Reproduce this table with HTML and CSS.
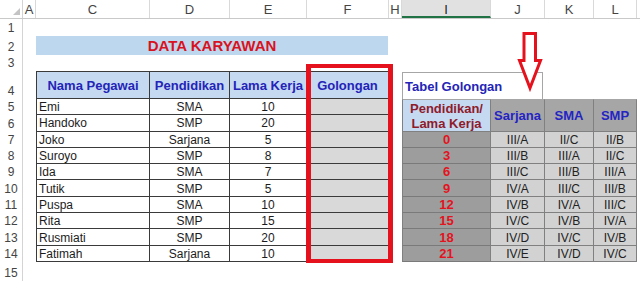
FILE: index.html
```html
<!DOCTYPE html>
<html>
<head>
<meta charset="utf-8">
<link rel="stylesheet" href="styles.css">
</head>
<body>
<div class="sheet">
  <div class="colbar">
    <div class="corner"><svg width="22" height="18" viewBox="0 0 22 18"><polygon points="20,8 20,15 13,15" fill="#c4c4c4"/></svg></div>
    <div class="ch wa">A</div>
    <div class="ch wc">C</div>
    <div class="ch wd">D</div>
    <div class="ch we">E</div>
    <div class="ch wf">F</div>
    <div class="ch wh">H</div>
    <div class="ch wi sel">I</div>
    <div class="ch wj">J</div>
    <div class="ch wk">K</div>
    <div class="ch wl">L</div>
    <div class="ch wr"></div>
  </div>
  <div class="body">
    <div class="rowbar">
      <div class="rh r1">1</div>
      <div class="rh r2">2</div>
      <div class="rh r3">3</div>
      <div class="rh r4">4</div>
      <div class="rh rn">5</div>
      <div class="rh rn">6</div>
      <div class="rh rn">7</div>
      <div class="rh rn">8</div>
      <div class="rh rn">9</div>
      <div class="rh rn">10</div>
      <div class="rh rn">11</div>
      <div class="rh rn">12</div>
      <div class="rh rn">13</div>
      <div class="rh rn">14</div>
      <div class="rh r15">15</div>
    </div>
    <div class="cells">
      <div class="title">DATA KARYAWAN</div>

      <div class="ltable">
        <div class="c hd first">Nama Pegawai</div>
        <div class="c hd">Pendidikan</div>
        <div class="c hd">Lama Kerja</div>
        <div class="c hd">Golongan</div>

        <div class="c name first">Emi</div><div class="c">SMA</div><div class="c">10</div><div class="c gol"></div>
        <div class="c name first">Handoko</div><div class="c">SMP</div><div class="c">20</div><div class="c gol"></div>
        <div class="c name first">Joko</div><div class="c">Sarjana</div><div class="c">5</div><div class="c gol"></div>
        <div class="c name first">Suroyo</div><div class="c">SMP</div><div class="c">8</div><div class="c gol"></div>
        <div class="c name first">Ida</div><div class="c">SMA</div><div class="c">7</div><div class="c gol"></div>
        <div class="c name first">Tutik</div><div class="c">SMP</div><div class="c">5</div><div class="c gol"></div>
        <div class="c name first">Puspa</div><div class="c">SMA</div><div class="c">10</div><div class="c gol"></div>
        <div class="c name first">Rita</div><div class="c">SMP</div><div class="c">15</div><div class="c gol"></div>
        <div class="c name first">Rusmiati</div><div class="c">SMP</div><div class="c">20</div><div class="c gol"></div>
        <div class="c name first">Fatimah</div><div class="c">Sarjana</div><div class="c">10</div><div class="c gol"></div>
      </div>

      <div class="rtable">
        <div class="tabel">Tabel Golongan</div>
        <div class="filler"></div>
        <div class="g ghead">Pendidikan/<br>Lama Kerja</div>
        <div class="g gcol">Sarjana</div>
        <div class="g gcol">SMA</div>
        <div class="g gcol">SMP</div>

        <div class="g num">0</div><div class="g v">III/A</div><div class="g v">II/C</div><div class="g v">II/B</div>
        <div class="g num">3</div><div class="g v">III/B</div><div class="g v">III/A</div><div class="g v">II/C</div>
        <div class="g num">6</div><div class="g v">III/C</div><div class="g v">III/B</div><div class="g v">III/A</div>
        <div class="g num">9</div><div class="g v">IV/A</div><div class="g v">III/C</div><div class="g v">III/B</div>
        <div class="g num">12</div><div class="g v">IV/B</div><div class="g v">IV/A</div><div class="g v">III/C</div>
        <div class="g num">15</div><div class="g v">IV/C</div><div class="g v">IV/B</div><div class="g v">IV/A</div>
        <div class="g num">18</div><div class="g v">IV/D</div><div class="g v">IV/C</div><div class="g v">IV/B</div>
        <div class="g num">21</div><div class="g v">IV/E</div><div class="g v">IV/D</div><div class="g v">IV/C</div>
      </div>

      <div class="redbox"></div>
      <svg class="arrow" width="30" height="64" viewBox="516 30 30 64">
        <polygon points="524,33.5 535.5,33.5 535.5,60.5 540.5,60.5 530,88 519.5,60.5 524,60.5" fill="#fff" stroke="#e5121d" stroke-width="3" stroke-linejoin="miter"/>
      </svg>
    </div>
  </div>
</div>
</body>
</html>
```

FILE: styles.css
```css
* { box-sizing: border-box; margin: 0; padding: 0; }
body {
  margin: 0;
  background: #fff;
  font-family: "Liberation Sans", Arial, sans-serif;
  width: 640px;
  height: 281px;
  overflow: hidden;
}
.sheet {
  width: 640px;
  height: 281px;
  display: flex;
  flex-direction: column;
}
.colbar {
  display: flex;
  height: 19px;
  flex: none;
  border-bottom: 1px solid #c9c9c9;
}
.corner {
  width: 23px;
  border-right: 1px solid #d4d4d4;
}
.corner svg { display: block; }
.ch {
  border-right: 1px solid #d9d9d9;
  color: #444;
  font-size: 13px;
  line-height: 18px;
  text-align: center;
  padding-top: 1px;
}
.wa { width: 13px; }
.wc { width: 114px; }
.wd { width: 80px; }
.we { width: 77px; }
.wf { width: 82px; }
.wh { width: 13px; }
.wi { width: 89px; }
.wj { width: 54px; }
.wk { width: 49px; }
.wl { width: 43px; }
.wr { flex: 1; border-right: none; }
.sel {
  background: #e1e1e1;
  border-bottom: 2px solid #217346;
  color: #222;
}
.body {
  display: flex;
  flex: 1;
}
.rowbar {
  width: 23px;
  border-right: 1px solid #d4d4d4;
  display: flex;
  flex-direction: column;
}
.rh {
  display: flex;
  align-items: flex-end;
  justify-content: center;
  color: #444;
  font-size: 12px;
  line-height: 14px;
  padding-bottom: 1px;
}
.r1 { height: 17px; }
.r2 { height: 19px; }
.r3 { height: 16px; }
.r4 { height: 28px; }
.rn { height: 16.3px; }
.r15 { height: 19px; }

.cells {
  position: relative;
  flex: 1;
  display: grid;
  grid-template-columns: 13px 114px 80px 77px 82px 13px 89px 54px 49px 43px 1fr;
  grid-template-rows: 17px 19px 16px 28px repeat(10, 16.3px) 1fr;
}
.title {
  grid-column: 2 / 6;
  grid-row: 2;
  background: #bdd7ee;
  color: #d9121f;
  font-weight: bold;
  font-size: 15px;
  display: flex;
  align-items: center;
  justify-content: center;
  margin-right: 1px;
}
.ltable {
  grid-column: 2 / 6;
  grid-row: 4 / 15;
  display: grid;
  grid-template-columns: 114px 80px 77px 82px;
  grid-template-rows: 28px repeat(10, 16.3px);
}
.c {
  border-right: 1px solid #3a3a3a;
  border-bottom: 1px solid #3a3a3a;
  display: flex;
  align-items: center;
  justify-content: center;
  font-size: 12px;
  line-height: 14px;
  color: #1c1c1c;
  padding-top: 1px;
}
.c.first { border-left: 1px solid #3a3a3a; }
.c.name { justify-content: flex-start; padding-left: 2px; }
.c.hd {
  border-top: 1px solid #3a3a3a;
  background: #c5d9f1;
  color: #2424b8;
  font-weight: bold;
  font-size: 13px;
}
.c.gol { background: #d9d9d9; }

.rtable {
  grid-column: 7 / 11;
  grid-row: 4 / 15;
  display: grid;
  grid-template-columns: 89px 54px 49px 43px;
  grid-template-rows: 28px repeat(10, 16.3px);
}
.tabel {
  grid-column: span 2;
  margin-top: 1px;
  margin-right: 2px;
  border: 1px solid #a6a6a6;
  border-bottom: none;
  background: #fff;
  color: #2424b8;
  font-weight: bold;
  font-size: 13px;
  display: flex;
  align-items: center;
  padding-left: 2px;
  padding-top: 1px;
}
.filler { grid-column: span 2; }
.g {
  border-right: 1px solid #808080;
  border-bottom: 1px solid #808080;
  display: flex;
  align-items: center;
  justify-content: center;
  font-size: 12px;
  line-height: 14px;
  padding-top: 1px;
}
.ghead {
  grid-row: span 2;
  border-left: 1px solid #808080;
  border-top: 1px solid #a6a6a6;
  background: #c5d9f1;
  color: #8e1b2b;
  font-weight: bold;
  font-size: 13px;
  line-height: 15px;
  text-align: center;
}
.gcol {
  grid-row: span 2;
  border-top: 1px solid #a6a6a6;
  background: #a6a6a6;
  color: #2424c4;
  font-weight: bold;
  font-size: 13px;
}
.num {
  border-left: 1px solid #808080;
  border-bottom-color: #7a7a7a;
  background: #9d9d9d;
  color: #e3141e;
  font-weight: bold;
  font-size: 13px;
}
.v {
  background: #d2d2d2;
  color: #222;
}

.redbox {
  position: absolute;
  left: 283px;
  top: 45px;
  width: 87px;
  height: 199px;
  border: 4px solid #e5121d;
  border-left-width: 5px;
  border-right-width: 5px;
}
.arrow {
  position: absolute;
  left: 493px;
  top: 11px;
}
```
